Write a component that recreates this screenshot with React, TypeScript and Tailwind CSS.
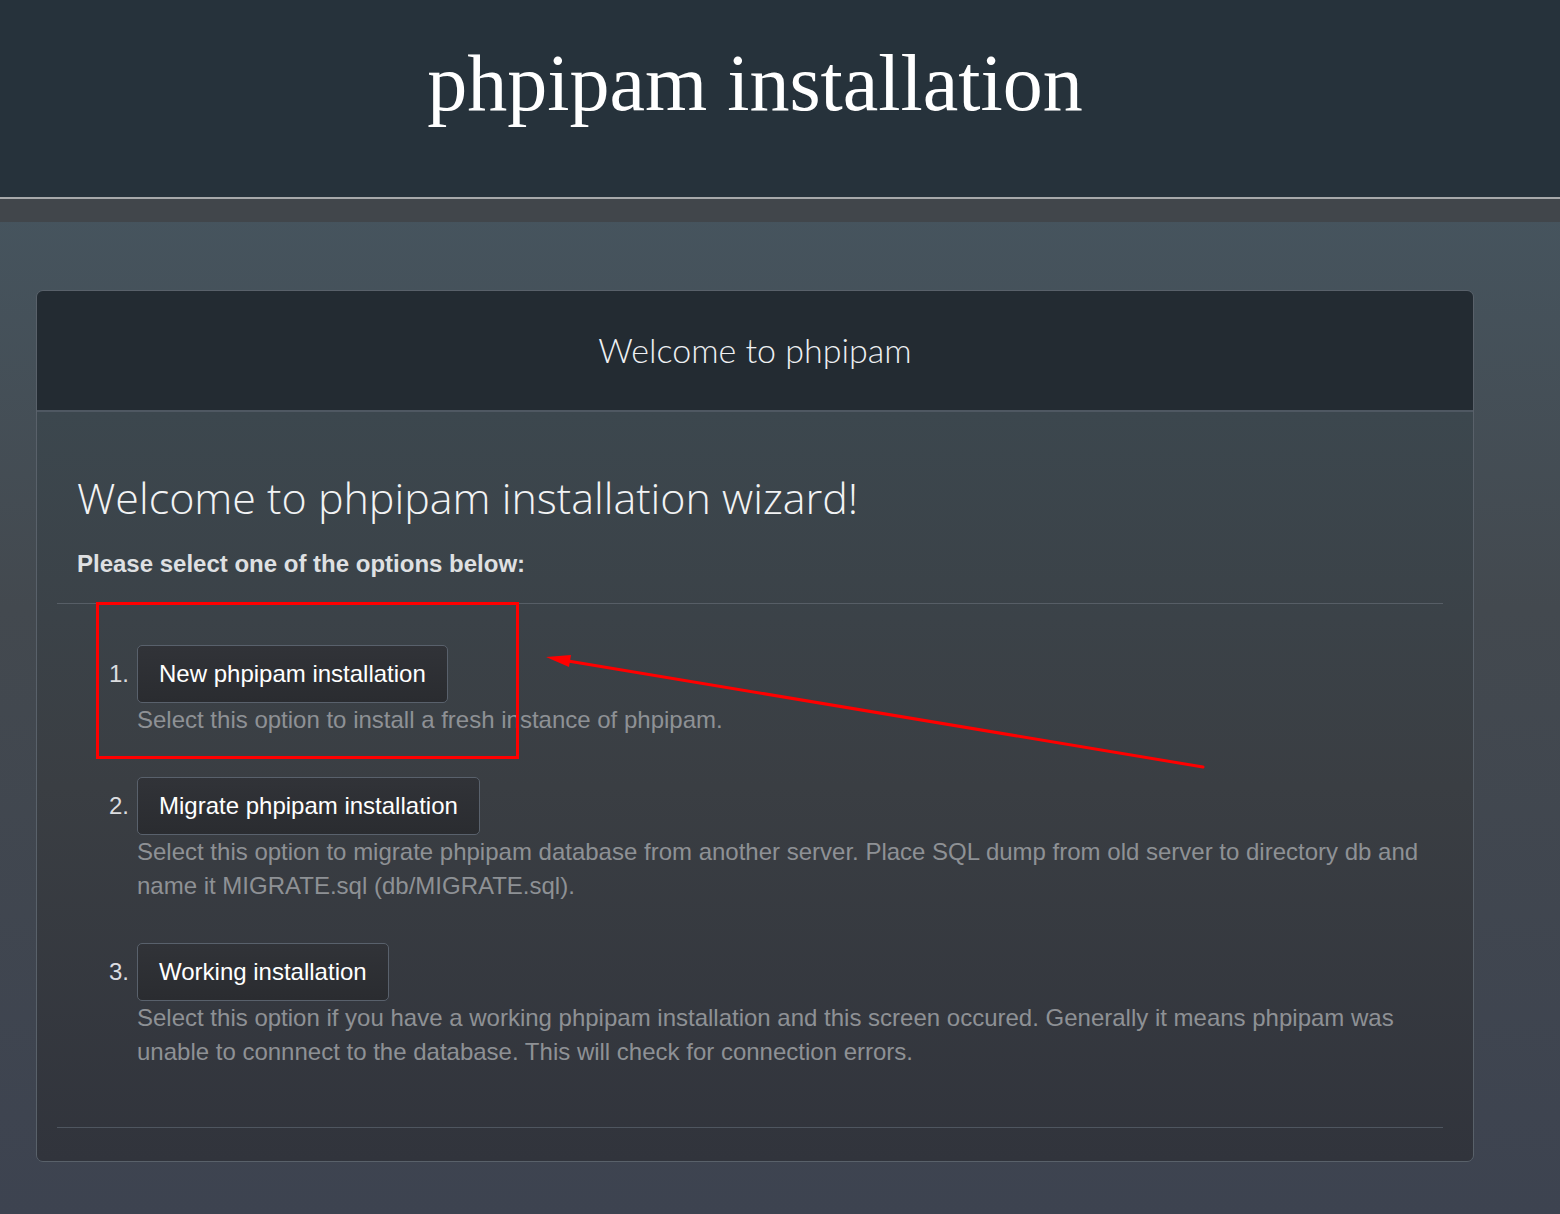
const sans = { fontFamily: '"Liberation Sans", Arial, sans-serif' }

type Option = { label: string; text: string }

const options: Option[] = [
  { label: 'New phpipam installation', text: 'Select this option to install a fresh instance of phpipam.' },
  {
    label: 'Migrate phpipam installation',
    text: 'Select this option to migrate phpipam database from another server. Place SQL dump from old server to directory db and name it MIGRATE.sql (db/MIGRATE.sql).',
  },
  {
    label: 'Working installation',
    text: 'Select this option if you have a working phpipam installation and this screen occured. Generally it means phpipam was unable to connnect to the database. This will check for connection errors.',
  },
]

function OptionItem({ index, option }: { index: number; option: Option }) {
  return (
    <li className="flex items-baseline">
      <span className="w-[60px] shrink-0 pr-[8px] text-right text-[24px] leading-[34px] text-[#dcdde0]">{index}.</span>
      <div className="flex flex-col items-start">
        <button
          type="button"
          className="rounded-[5px] border border-[#59616c] bg-gradient-to-b from-[#313338] to-[#2a2c30] px-[21px] py-[11px] text-[24px] leading-[34px] text-white"
        >
          {option.label}
        </button>
        <p className="text-[24px] leading-[34px] text-[#8e9195]">{option.text}</p>
      </div>
    </li>
  )
}

export default function App() {
  return (
    <div className="relative min-h-[1214px] w-full overflow-hidden bg-gradient-to-b from-[#475a66] via-[#43494f] to-[#3d4350]" style={sans}>
      <header className="h-[197px] bg-[#26323b] pt-[43px]">
        <h1
          className="ml-[36px] w-[1438px] text-center text-[80px] leading-none text-white"
          style={{ fontFamily: '"Liberation Serif", "Times New Roman", serif' }}
        >
          phpipam installation
        </h1>
      </header>
      <div className="h-[25px] border-t-2 border-[#a7a9ab] bg-[#41464b]" />

      <main className="pt-[68px] pb-[54px]">
        <section className="ml-[36px] w-[1438px] overflow-hidden rounded-[7px] border border-[#59616a]">
          <div className="flex h-[121px] items-center justify-center border-b-2 border-[#4f5862] bg-[#232b32]">
            <h2
              className="text-[34px] leading-[1.2] font-light text-[#eef0f2]"
              style={{ fontFamily: 'Lato, "Open Sans", sans-serif' }}
            >
              Welcome to phpipam
            </h2>
          </div>

          <div className="bg-gradient-to-b from-[#3c474e] via-[#3a3e43] to-[#31343c] pl-[20px] pr-[30px] pt-[59px] pb-[33px]">
            <div className="px-[20px]">
              <h3
                className="text-[43px] leading-[1.25] font-light text-[#f2f3f4]"
                style={{ fontFamily: '"Open Sans", Lato, sans-serif' }}
              >
                Welcome to phpipam installation wizard!
              </h3>
              <p className="mt-[22px] text-[24px] leading-[34px] font-bold text-[#dfe0e2]">
                Please select one of the options below:
              </p>
            </div>
            <hr className="mt-[22px] border-t border-[#575e66]" />

            <ol className="mt-[41px] flex flex-col gap-[40px] pl-[20px] pr-[10px]">
              {options.map((o, i) => (
                <OptionItem key={o.label} index={i + 1} option={o} />
              ))}
            </ol>

            <hr className="mt-[58px] border-t border-[#4f5660]" />
          </div>
        </section>
      </main>

      {/* screenshot annotation */}
      <div className="pointer-events-none absolute left-[96px] top-[602px] h-[157px] w-[423px] border-[3px] border-[#ff0000]" />
      <svg className="pointer-events-none absolute left-0 top-0" width="1560" height="1214" viewBox="0 0 1560 1214">
        <line x1="1203" y1="767" x2="568" y2="661" stroke="#ff0000" strokeWidth="3" strokeLinecap="round" />
        <polygon points="546,657 571,655 569,667" fill="#ff0000" />
      </svg>
    </div>
  )
}
